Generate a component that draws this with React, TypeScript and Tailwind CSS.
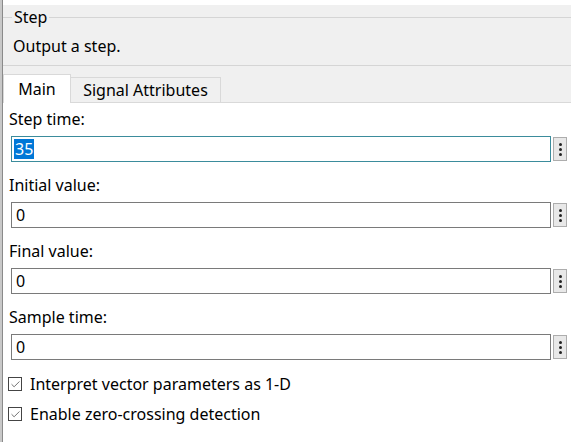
import { Check } from 'lucide-react';

const font = { fontFamily: '"Noto Sans", "Open Sans", sans-serif' };

function Field({ label, value, focused }: { label: string; value: string; focused?: boolean }) {
  return (
    <div className="flex flex-col">
      <div className="h-[24px] pl-[6px] leading-[24px]">{label}</div>
      <div className="flex items-start mt-[5px] pl-[8px] pr-[4px]">
        <div
          className={
            focused
              ? 'flex-1 h-[26px] border border-[#3b8c9c] bg-white flex items-center pl-[2px]'
              : 'flex-1 h-[26px] border border-[#7a7a7a] bg-white flex items-center pl-[4px]'
          }
        >
          {focused ? (
            <span className="bg-[#0078d7] text-white leading-[20px] px-[1px]">{value}</span>
          ) : (
            <span className="leading-[20px]">{value}</span>
          )}
        </div>
        <div className="ml-[2px] mt-[1px] w-[14px] h-[24px] border border-[#adadad] bg-[#e8e8e8] flex flex-col items-center justify-center gap-[2px]">
          <span className="w-[3px] h-[3px] rounded-full bg-[#222]" />
          <span className="w-[3px] h-[3px] rounded-full bg-[#222]" />
          <span className="w-[3px] h-[3px] rounded-full bg-[#222]" />
        </div>
      </div>
    </div>
  );
}

function CheckRow({ label }: { label: string }) {
  return (
    <div className="flex items-center h-[30px] pl-[5px]">
      <div className="w-[14px] h-[14px] border border-[#444] bg-white flex items-center justify-center">
        <Check className="w-[11px] h-[11px] text-[#333]" strokeWidth={1.5} />
      </div>
      <span className="ml-[8px] leading-[20px]">{label}</span>
    </div>
  );
}

export default function App() {
  return (
    <div className="w-[571px] h-[442px] bg-white overflow-hidden flex text-[16px] text-black" style={font}>
      <div className="w-[3px] bg-[#c8c8c8] border-r border-[#8a8a8a]" />
      <div className="flex-1 flex flex-col">
        <div className="h-[5px] bg-white" />
        <div className="bg-[#f0f0f0] flex flex-col">
          <div className="relative h-[49px] mt-[12px] border-t border-b border-[#d5d5d5]">
            <div className="absolute -top-[12px] left-[9px] px-[2px] bg-[#f0f0f0] leading-[22px]">Step</div>
            <div className="pt-[17px] pl-[10px] leading-[22px]">Output a step.</div>
          </div>
          <div className="flex items-end h-[37px] border-b border-[#d9d9d9]">
            <div className="w-[68px] h-[29px] -mb-[1px] bg-white border border-b-0 border-[#d9d9d9] flex items-center justify-center">
              Main
            </div>
            <div className="w-[150px] h-[25px] bg-[#f0f0f0] border border-l-0 border-b-0 border-[#d9d9d9] flex items-center justify-center">
              Signal Attributes
            </div>
          </div>
        </div>
        <div className="flex-1 bg-white flex flex-col pt-[4px]">
          <div className="flex flex-col gap-[11px]">
            <Field label="Step time:" value="35" focused />
            <Field label="Initial value:" value="0" />
            <Field label="Final value:" value="0" />
            <Field label="Sample time:" value="0" />
          </div>
          <div className="flex flex-col mt-[9px]">
            <CheckRow label="Interpret vector parameters as 1-D" />
            <CheckRow label="Enable zero-crossing detection" />
          </div>
        </div>
      </div>
    </div>
  );
}
